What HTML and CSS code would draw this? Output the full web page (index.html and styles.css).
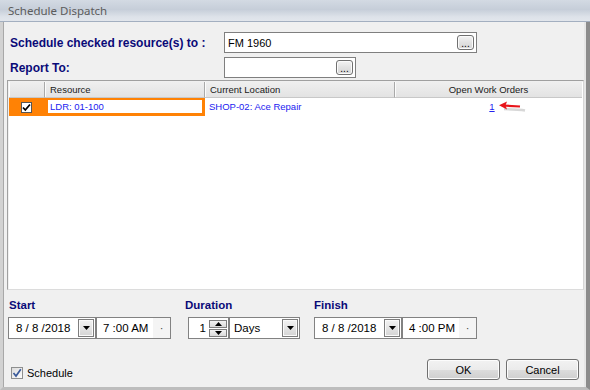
FILE: index.html
```html
<!DOCTYPE html>
<html>
<head>
<meta charset="utf-8">
<link rel="stylesheet" href="styles.css">
</head>
<body>
<div class="window">
  <div class="titlebar">Schedule Dispatch</div>
  <div class="content">
    <div class="field-row first">
      <label class="lbl">Schedule checked resource(s) to :</label>
      <div class="textbox wide"><span>FM 1960</span><button class="dots">...</button></div>
    </div>
    <div class="field-row second">
      <label class="lbl">Report To:</label>
      <div class="textbox narrow"><span></span><button class="dots">...</button></div>
    </div>

    <div class="grid">
      <div class="grid-head">
        <div class="hc c1"></div>
        <div class="hc c2">Resource</div>
        <div class="hc c3">Current Location</div>
        <div class="hc c4 center">Open Work Orders</div>
      </div>
      <div class="grid-row">
        <div class="rc c1 sel">
          <span class="cb">
            <svg width="9" height="9" viewBox="0 0 9 9"><path d="M1 4.5 L3.3 7 L8 1.5" fill="none" stroke="#000" stroke-width="1.8"/></svg>
          </span>
        </div>
        <div class="rc c2 selcell">LDR: 01-100</div>
        <div class="rc c3">SHOP-02: Ace Repair</div>
        <div class="rc c4 center"><a class="link">1</a></div>
      </div>
      <svg class="red-arrow" width="30" height="14" viewBox="0 0 30 14">
        <path d="M6 9 L24 10 L27 10.5" stroke="#bdbdbd" stroke-width="2.5" fill="none" opacity="0.6"/>
        <path d="M4 5.5 L22 6.5" stroke="#e8141a" stroke-width="2.2" fill="none"/>
        <path d="M1 5.3 L9 1.5 L7.5 5.6 L9 9.5 Z" fill="#e8141a"/>
      </svg>
    </div>

    <div class="pickers">
      <div class="group">
        <div class="glabel">Start</div>
        <div class="dtp">
          <div class="box date"><span>8 / 8 /2018</span><span class="ddbtn"><svg width="7" height="4" viewBox="0 0 7 4"><path d="M0 0 H7 L3.5 4 Z" fill="#000"/></svg></span></div>
          <div class="box time"><span>7 :00 AM</span><span class="spin">·</span></div>
        </div>
      </div>
      <div class="group dur">
        <div class="glabel">Duration</div>
        <div class="dtp shift">
          <div class="box num"><span>1</span>
            <span class="updown">
              <span class="ud"><svg width="7" height="4" viewBox="0 0 7 4"><path d="M0 4 H7 L3.5 0 Z" fill="#000"/></svg></span>
              <span class="ud"><svg width="7" height="4" viewBox="0 0 7 4"><path d="M0 0 H7 L3.5 4 Z" fill="#000"/></svg></span>
            </span>
          </div>
          <div class="box combo"><span>Days</span><span class="ddbtn"><svg width="7" height="4" viewBox="0 0 7 4"><path d="M0 0 H7 L3.5 4 Z" fill="#000"/></svg></span></div>
        </div>
      </div>
      <div class="group fin">
        <div class="glabel">Finish</div>
        <div class="dtp">
          <div class="box date"><span>8 / 8 /2018</span><span class="ddbtn"><svg width="7" height="4" viewBox="0 0 7 4"><path d="M0 0 H7 L3.5 4 Z" fill="#000"/></svg></span></div>
          <div class="box time"><span>4 :00 PM</span><span class="spin">·</span></div>
        </div>
      </div>
    </div>

    <div class="footer">
      <label class="chk">
        <span class="chkbox"><svg width="10" height="10" viewBox="0 0 10 10"><path d="M1.5 5 L4 8 L8.8 1.2" fill="none" stroke="#3a5a9a" stroke-width="1.7"/></svg></span>
        <span>Schedule</span>
      </label>
      <div class="buttons">
        <button class="btn">OK</button>
        <button class="btn">Cancel</button>
      </div>
    </div>
  </div>
</div>
</body>
</html>
```
FILE: styles.css
```css
html, body {
  margin: 0;
  padding: 0;
  background: #f0f0f0;
}
.window {
  width: 590px;
  height: 390px;
  box-sizing: border-box;
  background: #f0f0f0;
  border-left: 3px solid #d2d2d2;
  border-right: 4px solid #8c8c8c;
  border-bottom: 3px solid #bdbdbd;
  box-shadow: inset 1px 0 0 #a8a8a8, inset -2px 0 0 #e6e6e6;
  font-family: "Liberation Sans", Arial, sans-serif;
  font-size: 11px;
  color: #000;
  display: flex;
  flex-direction: column;
}
.titlebar {
  height: 21px;
  line-height: 21px;
  margin-left: -3px;
  margin-right: -4px;
  padding-left: 8px;
  border-bottom: 1px solid #a3afc0;
  background: linear-gradient(#d3dae3 0%, #c6ced9 45%, #dde2e9 80%, #e2e6ec 100%);
  font-family: "Noto Sans", "Open Sans", sans-serif;
  font-size: 11.5px;
  color: #5c5c5c;
}
.content {
  padding-left: 4px;
  display: flex;
  flex-direction: column;
}
.field-row {
  display: flex;
  align-items: center;
}
.field-row.first { margin-top: 10px; }
.field-row.second { margin-top: 4px; }
.lbl {
  width: 214px;
  margin-left: 3px;
  font-weight: bold;
  font-size: 12px;
  color: #0a0a78;
}
.textbox {
  height: 21px;
  box-sizing: border-box;
  border: 1px solid #7f7f7f;
  background: #fff;
  display: flex;
  align-items: center;
  justify-content: space-between;
  padding-left: 3px;
  padding-right: 2px;
  font-size: 11px;
}
.textbox.wide { width: 253px; }
.textbox.narrow { width: 132px; }
.dots {
  width: 17px;
  height: 15px;
  padding: 0;
  border: 1px solid #707070;
  border-radius: 3px;
  background: linear-gradient(#f4f4f4, #e2e2e2 50%, #d6d6d6);
  font-family: "Liberation Sans", Arial, sans-serif;
  font-size: 10px;
  line-height: 16px;
  color: #000;
  box-shadow: inset 0 0 0 1px #fbfbfb;
}
.grid {
  position: relative;
  margin-top: 2px;
  width: 577px;
  height: 210px;
  box-sizing: border-box;
  border: 1px solid #a0a0a0;
  border-right-color: #d6d6d6;
  border-bottom-color: #dcdcdc;
  box-shadow: inset 1px 1px 0 #f0f0f0;
  background: #fff;
  padding: 1px 0 0 1px;
}
.grid-head, .grid-row {
  display: grid;
  grid-template-columns: 36px 160px 190px 187px;
}
.grid-head {
  height: 16px;
}
.hc {
  background: linear-gradient(#efefef, #e3e3e3);
  border-right: 1px solid #a9a9a9;
  border-bottom: 1px solid #c8c8c8;
  box-shadow: inset 1px 0 0 #fcfcfc;
  box-sizing: border-box;
  padding-left: 5px;
  font-size: 9.5px;
  line-height: 15px;
  color: #202020;
  white-space: nowrap;
}
.hc.c4 { border-right: none; }
.center { text-align: center; padding-left: 0; }
.grid-row {
  height: 18px;
}
.rc {
  box-sizing: border-box;
  font-size: 9.5px;
  line-height: 17px;
  color: #2222f0;
  padding-left: 5px;
  white-space: nowrap;
}
.rc.sel {
  background: #ff8205;
  display: flex;
  align-items: center;
  padding-left: 12px;
}
.cb {
  width: 11px;
  height: 11px;
  box-sizing: border-box;
  border: 1px solid #555;
  background: #fff;
  display: flex;
  align-items: center;
  justify-content: center;
}
.rc.selcell {
  border: 3px solid #ff8205;
  border-top-width: 2px;
  line-height: 13px;
  padding-left: 2px;
  background: #fff;
}
.rc.c3 { padding-left: 4px; }
.link {
  color: #2222f0;
  text-decoration: underline;
  margin-left: 2px;
}
.red-arrow {
  position: absolute;
  left: 490px;
  top: 19px;
}
.pickers {
  display: flex;
  margin-top: 8px;
  margin-left: 1px;
}
.group {
  display: flex;
  flex-direction: column;
}
.group.dur { margin-left: 14px; }
.group.fin { margin-left: 14px; }
.glabel {
  font-weight: bold;
  font-size: 11.5px;
  color: #0a0a78;
  height: 14px;
  line-height: 14px;
  margin-left: 1px;
}
.group.dur .glabel, .group.fin .glabel { margin-left: 0; }
.dtp {
  display: flex;
  margin-top: 5px;
}
.dtp.shift { margin-left: 3px; }
.box {
  height: 22px;
  box-sizing: border-box;
  border: 1px solid #828282;
  background: #fff;
  display: flex;
  align-items: center;
  justify-content: space-between;
  font-size: 11.5px;
}
.box.date {
  width: 88px;
  padding-left: 7px;
  padding-right: 1px;
}
.box.time {
  width: 75px;
  padding-left: 6px;
  padding-right: 0;
}
.ddbtn {
  width: 16px;
  height: 18px;
  box-sizing: border-box;
  border: 1px solid #7d7d7d;
  background: linear-gradient(#f2f2f2, #e4e4e4 50%, #d4d4d4);
  display: flex;
  align-items: center;
  justify-content: center;
  box-shadow: inset 0 0 0 1px #fafafa;
}
.spin {
  width: 17px;
  height: 20px;
  background: #f4f4f4;
  color: #444;
  font-size: 11px;
  line-height: 20px;
  text-align: center;
}
.box.num {
  width: 41px;
  padding-left: 10px;
  padding-right: 1px;
  justify-content: flex-end;
  gap: 3px;
}
.updown {
  display: flex;
  flex-direction: column;
  gap: 1px;
}
.ud {
  width: 18px;
  height: 8px;
  box-sizing: border-box;
  border: 1px solid #7d7d7d;
  background: linear-gradient(#f2f2f2, #dadada);
  display: flex;
  align-items: center;
  justify-content: center;
}
.box.combo {
  width: 71px;
  padding-left: 4px;
  padding-right: 1px;
}
.footer {
  display: flex;
  justify-content: space-between;
  align-items: flex-end;
  margin-top: 20px;
  margin-right: 7px;
}
.chk {
  display: flex;
  align-items: center;
  gap: 4px;
  margin-left: 4px;
  margin-bottom: 1px;
  font-size: 11px;
}
.chkbox {
  width: 12px;
  height: 12px;
  box-sizing: border-box;
  border: 1px solid #8e8f8f;
  background: linear-gradient(135deg, #dcdcdc, #fdfdfd);
  display: flex;
  align-items: center;
  justify-content: center;
}
.buttons {
  display: flex;
  gap: 6px;
}
.btn {
  width: 73px;
  height: 21px;
  padding: 0;
  border: 1px solid #707070;
  border-radius: 3px;
  background: linear-gradient(#f2f2f2 0%, #ebebeb 50%, #dddddd 51%, #cfcfcf 100%);
  box-shadow: inset 0 0 0 1px #fcfcfc;
  font-family: "Liberation Sans", Arial, sans-serif;
  font-size: 11px;
  color: #000;
}
```
